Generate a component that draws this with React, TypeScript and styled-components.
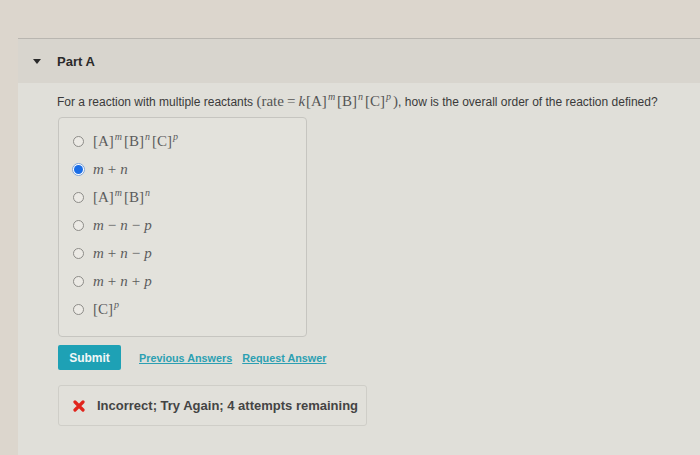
import React from 'react';
import { FC } from 'react';
import styled, { createGlobalStyle } from 'styled-components';

const GlobalStyle = createGlobalStyle`
  html, body {
    margin: 0;
    padding: 0;
    background: #dcd6cd;
  }
  body {
    width: 700px;
    height: 455px;
    overflow: hidden;
    font-family: "Liberation Sans", Arial, sans-serif;
  }
`;

const Page = styled.div`
  width: 700px;
  height: 455px;
  padding-top: 38px;
  box-sizing: border-box;
`;

const Panel = styled.div`
  margin-left: 18px;
  height: 417px;
  border-top: 1px solid #b9b6b0;
  background: #dedcd6;
  display: flex;
  flex-direction: column;
`;

const Header = styled.div`
  height: 44px;
  display: flex;
  align-items: center;
  padding-left: 15px;
  background: #d8d5ce;
`;

const Caret = styled.span`
  width: 0;
  height: 0;
  border-left: 4px solid transparent;
  border-right: 4px solid transparent;
  border-top: 5px solid #2a2a2a;
  margin-right: 16px;
`;

const PartTitle = styled.span`
  font-size: 13px;
  font-weight: bold;
  color: #2a2a2a;
`;

const Body = styled.div`
  padding: 9px 0 0 39px;
  display: flex;
  flex-direction: column;
  align-items: flex-start;
  background: #e0dfd9;
  flex: 1;
`;

const Question = styled.p`
  margin: 0;
  font-size: 12px;
  line-height: 18px;
  color: #3a3a3a;
`;

const MathRun = styled.span`
  font-family: "Liberation Serif", "DejaVu Serif", serif;
  font-size: 15px;
  color: #555;
`;

const Var = styled.i`
  font-family: "Liberation Serif", "DejaVu Serif", serif;
  font-style: italic;
  margin-right: 1px;
`;

const Eq = styled.span`
  margin: 0 3px;
`;

const Sup = styled.sup`
  font-family: "Liberation Serif", serif;
  font-style: italic;
  font-size: 10px;
  vertical-align: 6px;
  line-height: 0;
  margin: 0 2px 0 1px;
`;

const OptionsBox = styled.div`
  margin-top: 6px;
  margin-left: 1px;
  width: 249px;
  height: 220px;
  box-sizing: border-box;
  border: 1px solid #c6c5c0;
  border-radius: 4px;
  background: #e3e2dc;
  padding: 13px 0 0 14px;
  display: flex;
  flex-direction: column;
  gap: 8px;
`;

const OptionRow = styled.label`
  display: flex;
  align-items: center;
  height: 20px;
  gap: 9px;
  color: #666;
`;

const Radio = styled.span<{ $checked?: boolean }>`
  width: ${p => (p.$checked ? '13px' : '11px')};
  height: ${p => (p.$checked ? '13px' : '11px')};
  margin: ${p => (p.$checked ? '0 -1px' : '0')};
  border-radius: 50%;
  box-sizing: border-box;
  display: flex;
  align-items: center;
  justify-content: center;
  border: ${p => (p.$checked ? '1px solid #7fa4d8' : '1.5px solid #8d8c88')};
  background: ${p => (p.$checked ? '#ffffff' : '#eceae5')};
  &::after {
    content: '';
    display: ${p => (p.$checked ? 'block' : 'none')};
    width: 9px;
    height: 9px;
    border-radius: 50%;
    background: #1a6de6;
  }
`;

const OpText = styled.span<{ $italic?: boolean }>`
  font-family: "Liberation Serif", "DejaVu Serif", serif;
  font-size: 15px;
  font-style: ${p => (p.$italic ? 'italic' : 'normal')};
  color: #5c5c5c;
`;

const Op = styled.span`
  font-style: normal;
  margin: 0 4px;
`;

const Actions = styled.div`
  margin-top: 8px;
  margin-left: 1px;
  display: flex;
  align-items: center;
  gap: 18px;
`;

const SubmitButton = styled.button`
  width: 63px;
  height: 25px;
  border: none;
  border-radius: 2px;
  background: #1ea1b5;
  color: #f2f7f7;
  font-family: "Liberation Sans", Arial, sans-serif;
  font-size: 12px;
  font-weight: bold;
  padding: 0;
`;

const Links = styled.div`
  display: flex;
  gap: 10px;
  padding-top: 1px;
`;

const LinkText = styled.a`
  font-size: 10.8px;
  font-weight: bold;
  color: #2c9fb2;
  text-decoration: underline;
`;

const Feedback = styled.div`
  margin-top: 15px;
  margin-left: 1px;
  width: 309px;
  height: 41px;
  box-sizing: border-box;
  border: 1px solid #cfcec8;
  border-radius: 3px;
  background: #e1e0da;
  display: flex;
  align-items: center;
  padding-left: 14px;
  gap: 12px;
`;

const Cross = styled.svg`
  width: 12px;
  height: 12px;
`;

const FeedbackText = styled.span`
  font-size: 13px;
  font-weight: bold;
  color: #444;
`;

const options: { id: string; node: React.ReactNode; checked?: boolean }[] = [
  { id: 'abc', node: <OpText>[A]<Sup>m</Sup>[B]<Sup>n</Sup>[C]<Sup>p</Sup></OpText> },
  { id: 'mn', checked: true, node: <OpText $italic>m<Op>+</Op>n</OpText> },
  { id: 'ab', node: <OpText>[A]<Sup>m</Sup>[B]<Sup>n</Sup></OpText> },
  { id: 'm-n-p', node: <OpText $italic>m<Op>−</Op>n<Op>−</Op>p</OpText> },
  { id: 'm+n-p', node: <OpText $italic>m<Op>+</Op>n<Op>−</Op>p</OpText> },
  { id: 'm+n+p', node: <OpText $italic>m<Op>+</Op>n<Op>+</Op>p</OpText> },
  { id: 'c', node: <OpText>[C]<Sup>p</Sup></OpText> },
];

export const App: FC = () => {
  return (
    <>
      <GlobalStyle />
      <Page>
        <Panel>
          <Header>
            <Caret />
            <PartTitle>Part A</PartTitle>
          </Header>
          <Body>
            <Question>
              For a reaction with multiple reactants <MathRun>(rate<Eq>=</Eq><Var>k</Var>[A]<Sup>m</Sup>[B]<Sup>n</Sup>[C]<Sup>p</Sup>)</MathRun>, how is the overall order of the reaction defined?
            </Question>
            <OptionsBox>
              {options.map(o => (
                <OptionRow key={o.id}>
                  <Radio $checked={o.checked} />
                  {o.node}
                </OptionRow>
              ))}
            </OptionsBox>
            <Actions>
              <SubmitButton>Submit</SubmitButton>
              <Links>
                <LinkText>Previous Answers</LinkText>
                <LinkText>Request Answer</LinkText>
              </Links>
            </Actions>
            <Feedback>
              <Cross viewBox="0 0 12 12">
                <path d="M2 2 L10 10 M10 2 L2 10" stroke="#e0241c" strokeWidth="3.2" strokeLinecap="round" />
              </Cross>
              <FeedbackText>Incorrect; Try Again; 4 attempts remaining</FeedbackText>
            </Feedback>
          </Body>
        </Panel>
      </Page>
    </>
  );
};

export default App;
